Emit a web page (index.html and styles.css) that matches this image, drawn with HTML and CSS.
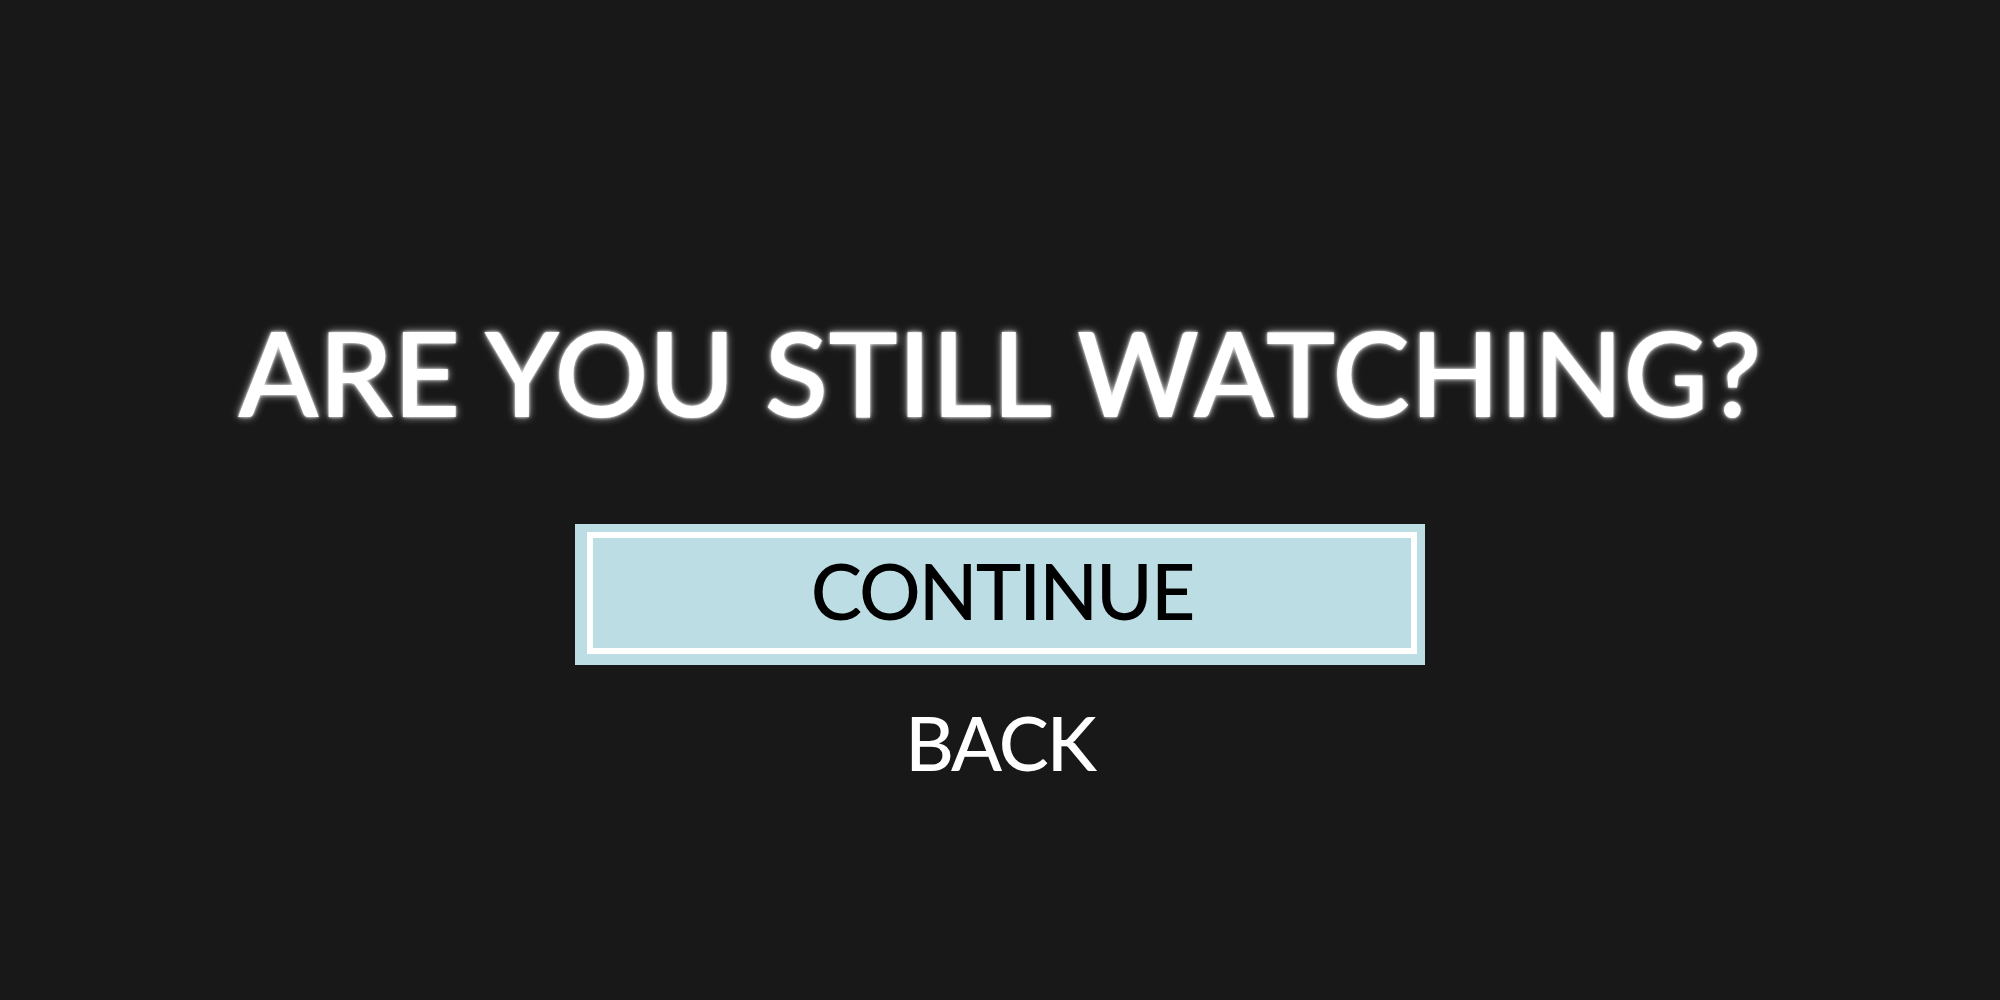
FILE: index.html
```html
<!DOCTYPE html>
<html lang="en">
<head>
  <meta charset="UTF-8" />
  <title>Are you still watching?</title>
  <link rel="stylesheet" href="styles.css">
</head>
<body>
  <main class="prompt">
    <h1 class="prompt-title">ARE YOU STILL WATCHING?</h1>
    <button class="continue-button"><span class="continue-label">CONTINUE</span></button>
    <button class="back-button">BACK</button>
  </main>
</body>
</html>
```

FILE: styles.css
```css
body {
  margin: 0;
  height: 100vh;
  background: #181818;
  font-family: Lato, "Liberation Sans", sans-serif;
  color: white;
}

.prompt {
  display: flex;
  flex-direction: column;
  align-items: center;
  padding-top: 314px;
}

.prompt-title {
  margin: 0;
  font-size: 117px;
  font-weight: 600;
  line-height: 1;
  letter-spacing: 0;
  text-shadow: 0 0 3px #fff, 0 0 9px rgba(255,255,255,0.75);
}

.continue-button {
  margin-top: 93px;
  width: 850px;
  height: 141px;
  padding: 8px 8px 11px 12px;
  background: #bcdde3;
  border: none;
  cursor: pointer;
  font-family: inherit;
}

.continue-label {
  display: block;
  height: 110px;
  border: 6px solid white;
  font-size: 77px;
  font-weight: 500;
  line-height: 104px;
  color: black;
  letter-spacing: -2px;
}

.back-button {
  margin-top: 40px;
  padding: 0;
  background: none;
  border: none;
  color: white;
  font-family: inherit;
  font-size: 75px;
  font-weight: 500;
  line-height: 1;
  letter-spacing: -2px;
  cursor: pointer;
}
```
